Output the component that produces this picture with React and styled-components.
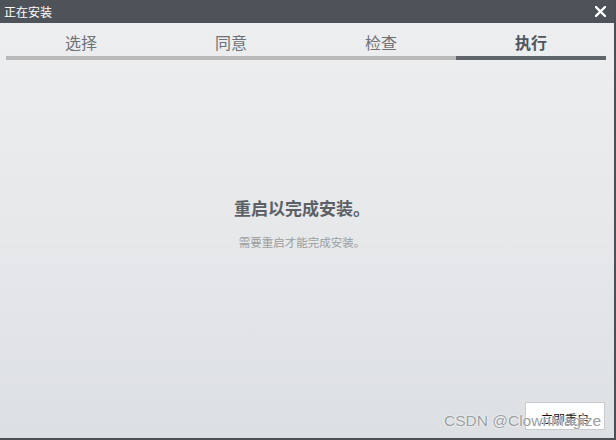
import styled, { createGlobalStyle } from "styled-components";
import * as React from "react";

const GlobalStyle = createGlobalStyle`
  html, body {
    margin: 0;
    padding: 0;
    background: #ffffff;
  }
  * {
    box-sizing: border-box;
  }
`;

const steps = ["选择", "同意", "检查", "执行"];
const current = 3;

export default function App() {
  return (
    <>
      <GlobalStyle />
      <Window>
        <TitleBar>
          <Title>正在安装</Title>
          <Close>
            <svg width="11" height="11" viewBox="0 0 11 11">
              <path d="M1 1 L10 10 M10 1 L1 10" stroke="#ffffff" strokeWidth="2.3" strokeLinecap="square" />
            </svg>
          </Close>
        </TitleBar>
        <Body>
          <Steps>
            {steps.map((s, i) => (
              <Step key={s}>
                <StepLabel active={i === current}>{s}</StepLabel>
                <StepBar active={i === current} />
              </Step>
            ))}
          </Steps>
          <Message>
            <Heading>重启以完成安装。</Heading>
            <Sub>需要重启才能完成安装。</Sub>
          </Message>
          <Footer>
            <Button>立即重启</Button>
          </Footer>
          <Watermark>CSDN @ClownMagize</Watermark>
        </Body>
      </Window>
    </>
  );
}

const Window = styled.div`
  position: relative;
  width: 616px;
  height: 440px;
  display: flex;
  flex-direction: column;
  border-right: 2px solid #4b5057;
  border-bottom: 2px solid #4b5057;
  font-family: "Noto Sans CJK SC", "Liberation Sans", sans-serif;
`;

const TitleBar = styled.div`
  height: 23px;
  background: #4e535a;
  display: flex;
  align-items: center;
  justify-content: space-between;
  padding: 0 8px 0 4px;
  color: #ffffff;
`;

const Title = styled.div`
  font-size: 12px;
  line-height: 23px;
`;

const Close = styled.div`
  display: flex;
  align-items: center;
  height: 23px;
  padding-bottom: 1px;
`;

const Body = styled.div`
  position: relative;
  flex: 1;
  display: flex;
  flex-direction: column;
  padding: 0 8px 0 6px;
  background: linear-gradient(to bottom, #eceef0 0%, #e6e8ea 50%, #dde0e3 100%);
`;

const Steps = styled.div`
  display: grid;
  grid-template-columns: repeat(4, 1fr);
`;

const Step = styled.div`
  display: flex;
  flex-direction: column;
  align-items: center;
`;

const StepLabel = styled.div`
  height: 33px;
  padding-top: 8px;
  font-size: 16px;
  line-height: 22px;
  color: ${({ active }) => (active ? "#50555b" : "#6e7175")};
  font-weight: ${({ active }) => (active ? 600 : 400)};
`;

const StepBar = styled.div`
  align-self: stretch;
  height: 4px;
  background: ${({ active }) => (active ? "#5f656b" : "#b9b9b9")};
`;

const Message = styled.div`
  flex: 1;
  display: flex;
  flex-direction: column;
  align-items: center;
  padding-top: 137px;
  padding-right: 8px;
`;

const Heading = styled.div`
  font-size: 17px;
  font-weight: 700;
  line-height: 22px;
  color: #5b6066;
`;

const Sub = styled.div`
  margin-top: 15px;
  font-size: 11.5px;
  line-height: 16px;
  color: #9b9c9e;
`;

const Footer = styled.div`
  display: flex;
  justify-content: flex-end;
  padding: 0 1px 8px 0;
`;

const Button = styled.button`
  width: 80px;
  height: 28px;
  background: #ffffff;
  border: 1px solid #c9cbce;
  font-family: "Noto Sans CJK SC", sans-serif;
  font-size: 12px;
  color: #111111;
  padding: 0;
  padding-top: 4px;
`;

const Watermark = styled.div`
  position: absolute;
  right: 13px;
  bottom: 8px;
  font-family: "Liberation Sans", Arial, sans-serif;
  font-size: 15.5px;
  color: #9a9da1;
  text-shadow: 0 0 1px #ffffff, 0 0 2px #ffffff;
  pointer-events: none;
`;
